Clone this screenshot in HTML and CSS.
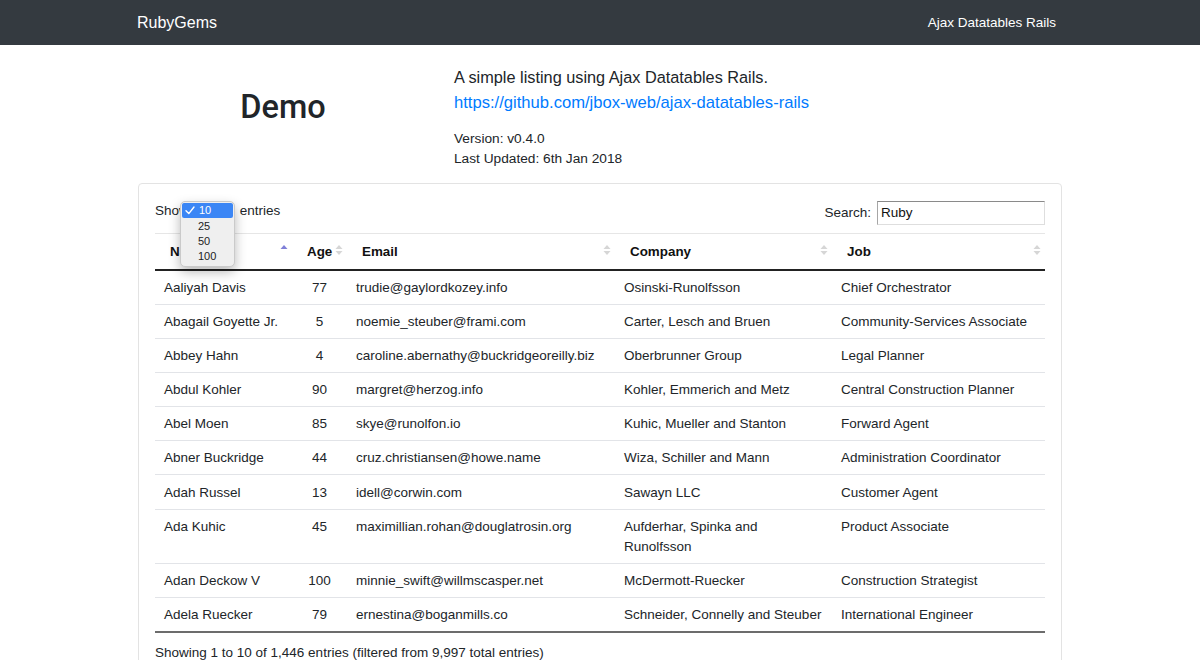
FILE: index.html
```html
<!DOCTYPE html>
<html lang="en">
<head>
<meta charset="utf-8">
<title>Ajax Datatables Rails Demo</title>
<link rel="stylesheet" href="styles.css">
</head>
<body>
<nav class="navbar">
  <div class="nav-inner">
    <a class="brand" href="#">RubyGems</a>
    <a class="nav-link" href="#">Ajax Datatables Rails</a>
  </div>
</nav>

<main class="page">
  <section class="intro">
    <div class="intro-title">
      <h1>Demo</h1>
    </div>
    <div class="intro-text">
      <p class="lead">A simple listing using Ajax Datatables Rails.<br>
        <a class="repo" href="#">https://github.com/jbox-web/ajax-datatables-rails</a></p>
      <p class="meta">Version: v0.4.0<br>Last Updated: 6th Jan 2018</p>
    </div>
  </section>

  <section class="card">
    <div class="controls">
      <div class="length">
        <span>Show</span>
        <span class="select-box"></span>
        <span>entries</span>
        <div class="popup">
          <div class="opt opt-active">
            <svg class="check" width="10" height="9" viewBox="0 0 10 9"><polyline points="1,4.8 3.8,7.6 9,1" fill="none" stroke="#fff" stroke-width="1.4" stroke-linecap="round" stroke-linejoin="round"/></svg>
            10
          </div>
          <div class="opt">25</div>
          <div class="opt">50</div>
          <div class="opt">100</div>
        </div>
      </div>
      <label class="search">Search:<span class="search-input">Ruby</span></label>
    </div>

    <table class="data">
      <colgroup>
        <col class="c-name"><col class="c-age"><col class="c-email"><col class="c-company"><col class="c-job">
      </colgroup>
      <thead>
        <tr>
          <th>Name<span class="sort"><svg width="8" height="12" viewBox="0 0 8 12"><polygon points="0.5,5 4,1 7.5,5" fill="#8080d8"/></svg></span></th>
          <th>Age<span class="sort"><svg width="8" height="12" viewBox="0 0 8 12"><polygon points="0.5,5 4,1 7.5,5" fill="#d6d6d6"/><polygon points="0.5,7 4,11 7.5,7" fill="#d6d6d6"/></svg></span></th>
          <th>Email<span class="sort"><svg width="8" height="12" viewBox="0 0 8 12"><polygon points="0.5,5 4,1 7.5,5" fill="#d6d6d6"/><polygon points="0.5,7 4,11 7.5,7" fill="#d6d6d6"/></svg></span></th>
          <th>Company<span class="sort"><svg width="8" height="12" viewBox="0 0 8 12"><polygon points="0.5,5 4,1 7.5,5" fill="#d6d6d6"/><polygon points="0.5,7 4,11 7.5,7" fill="#d6d6d6"/></svg></span></th>
          <th>Job<span class="sort"><svg width="8" height="12" viewBox="0 0 8 12"><polygon points="0.5,5 4,1 7.5,5" fill="#d6d6d6"/><polygon points="0.5,7 4,11 7.5,7" fill="#d6d6d6"/></svg></span></th>
        </tr>
      </thead>
      <tbody>
        <tr><td>Aaliyah Davis</td><td class="num">77</td><td>trudie@gaylordkozey.info</td><td>Osinski-Runolfsson</td><td>Chief Orchestrator</td></tr>
        <tr><td>Abagail Goyette Jr.</td><td class="num">5</td><td>noemie_steuber@frami.com</td><td>Carter, Lesch and Bruen</td><td>Community-Services Associate</td></tr>
        <tr><td>Abbey Hahn</td><td class="num">4</td><td>caroline.abernathy@buckridgeoreilly.biz</td><td>Oberbrunner Group</td><td>Legal Planner</td></tr>
        <tr><td>Abdul Kohler</td><td class="num">90</td><td>margret@herzog.info</td><td>Kohler, Emmerich and Metz</td><td>Central Construction Planner</td></tr>
        <tr><td>Abel Moen</td><td class="num">85</td><td>skye@runolfon.io</td><td>Kuhic, Mueller and Stanton</td><td>Forward Agent</td></tr>
        <tr><td>Abner Buckridge</td><td class="num">44</td><td>cruz.christiansen@howe.name</td><td>Wiza, Schiller and Mann</td><td>Administration Coordinator</td></tr>
        <tr><td>Adah Russel</td><td class="num">13</td><td>idell@corwin.com</td><td>Sawayn LLC</td><td>Customer Agent</td></tr>
        <tr><td>Ada Kuhic</td><td class="num">45</td><td>maximillian.rohan@douglatrosin.org</td><td>Aufderhar, Spinka and Runolfsson</td><td>Product Associate</td></tr>
        <tr><td>Adan Deckow V</td><td class="num">100</td><td>minnie_swift@willmscasper.net</td><td>McDermott-Ruecker</td><td>Construction Strategist</td></tr>
        <tr><td>Adela Ruecker</td><td class="num">79</td><td>ernestina@boganmills.co</td><td>Schneider, Connelly and Steuber</td><td>International Engineer</td></tr>
      </tbody>
    </table>
    <div class="info">Showing 1 to 10 of 1,446 entries (filtered from 9,997 total entries)</div>
  </section>
</main>
</body>
</html>
```

FILE: styles.css
```css
* { box-sizing: border-box; }

html, body {
  margin: 0;
  padding: 0;
  background: #fff;
}

body {
  font-family: "Liberation Sans", Arial, Helvetica, sans-serif;
  color: #212529;
  font-size: 13.5px;
  line-height: 20px;
}

a { text-decoration: none; }

.navbar {
  background: #343a40;
  height: 45px;
}

.nav-inner {
  width: 960px;
  margin: 0 auto;
  height: 45px;
  padding: 0 15px 0 17px;
  display: flex;
  align-items: center;
  justify-content: space-between;
}

.brand {
  color: #fff;
  font-size: 16px;
  line-height: 20px;
}

.nav-link {
  color: #fff;
  font-size: 13.5px;
  padding-right: 9px;
}

.page {
  width: 924px;
  margin: 0 auto;
}

.intro {
  display: grid;
  grid-template-columns: 290px 1fr;
  column-gap: 26px;
  padding-top: 20px;
}

.intro-title {
  text-align: center;
}

.intro-title h1 {
  margin: 23px 0 0;
  font-family: Roboto, "Liberation Sans", Arial, sans-serif;
  font-size: 32.5px;
  line-height: 38px;
  font-weight: 500;
  color: #212529;
}

.lead {
  margin: 0;
  font-size: 16.3px;
  line-height: 25px;
}

.repo {
  color: #007bff;
  font-size: 16.6px;
}

.meta {
  margin: 14px 0 0;
  font-size: 13.7px;
  line-height: 20px;
}

.card {
  margin-top: 14px;
  border: 1px solid #e3e3e3;
  border-radius: 4px;
  padding: 16px 16px 20px;
}

.controls {
  display: flex;
  justify-content: space-between;
  align-items: center;
  height: 26px;
  margin-bottom: 7px;
}

.length {
  position: relative;
  display: flex;
  align-items: center;
  height: 26px;
  margin-top: -5px;
  z-index: 5;
}

.select-box {
  display: inline-block;
  width: 44px;
  height: 18px;
  margin: 0 4px 0 3px;
}

.popup {
  position: absolute;
  left: 25px;
  top: 3px;
  width: 55px;
  height: 66px;
  background: #efefef;
  border: 1px solid #cacaca;
  border-radius: 5px;
  box-shadow: 0 5px 12px rgba(0, 0, 0, 0.28);
  padding: 1px 1px;
  font-size: 11px;
  z-index: 10;
}

.opt {
  position: relative;
  height: 15px;
  line-height: 15px;
  padding-left: 16px;
  color: #222;
}

.opt-active {
  background: #3b86f5;
  color: #fff;
  border-radius: 2px;
  margin-bottom: 1px;
  padding-left: 17px;
}

.check {
  position: absolute;
  left: 3px;
  top: 3px;
}

.search {
  display: flex;
  align-items: center;
  gap: 6px;
}

.search-input {
  display: inline-block;
  width: 168px;
  height: 24px;
  line-height: 20px;
  padding: 1px 3px;
  border-top: 1px solid #8a8a8a;
  border-left: 1px solid #a6a6a6;
  border-right: 1px solid #dedede;
  border-bottom: 1px solid #dedede;
  background: #fff;
  color: #111;
}

.data {
  width: 890px;
  border-collapse: collapse;
  table-layout: fixed;
}

.c-name { width: 137px; }
.c-age { width: 55px; }
.c-email { width: 268px; }
.c-company { width: 217px; }
.c-job { width: 213px; }

.data th {
  position: relative;
  text-align: left;
  font-weight: 700;
  font-size: 13.4px;
  line-height: 18px;
  padding: 9px 14px 8px 15px;
  border-top: 1px solid #e6e6e6;
  border-bottom: 2px solid #222;
  color: #111;
}

.sort {
  position: absolute;
  right: 4px;
  top: 10px;
  line-height: 0;
}

.data td {
  padding: 7px 5px 6px 9px;
  border-bottom: 1px solid #e2e4e8;
  vertical-align: top;
  color: #212529;
}

.data td.num {
  text-align: center;
  padding-left: 6px;
  padding-right: 6px;
}

.data tbody tr:nth-child(n+5) td {
  padding-top: 7.2px;
}

.data tbody tr:last-child td {
  border-bottom: 2px solid #6c6c6c;
}

.info {
  margin-top: 10px;
  line-height: 20px;
}
```
